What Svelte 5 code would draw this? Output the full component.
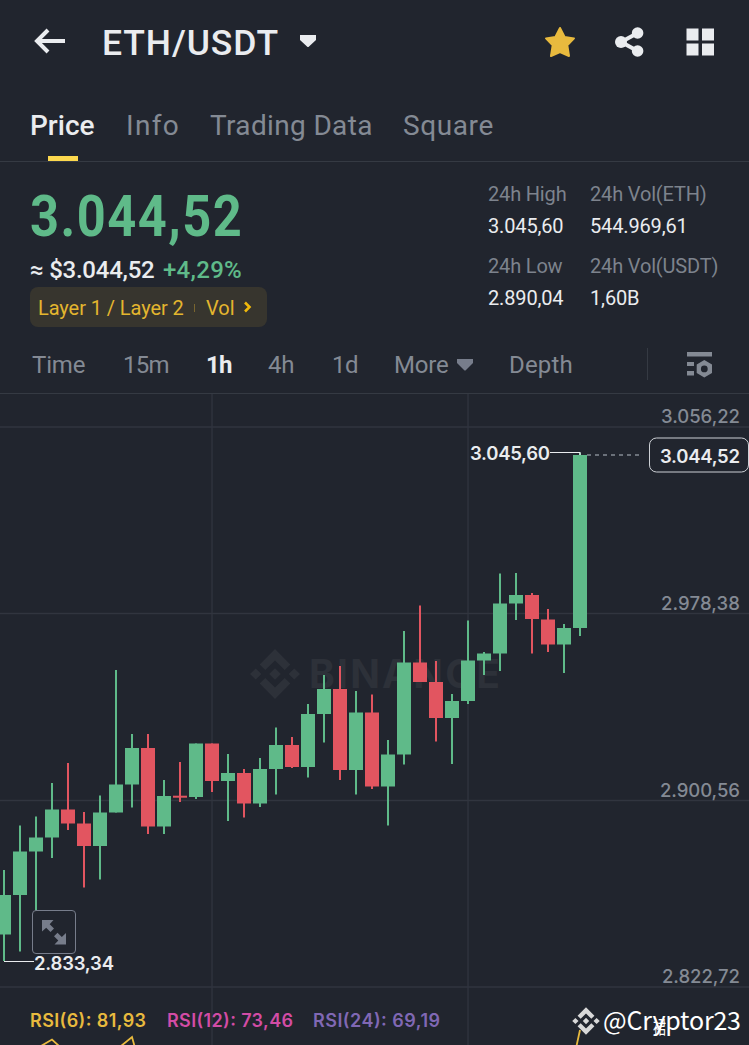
<script>
  const tabs = ['Price', 'Info', 'Trading Data', 'Square'];
  const stats = [
    ['24h High', '3.045,60'],
    ['24h Vol(ETH)', '544.969,61'],
    ['24h Low', '2.890,04'],
    ['24h Vol(USDT)', '1,60B']
  ];
  const levels = [
    { y: 427, label: '3.056,22', w: 79 },
    { y: 613.5, label: '2.978,38', w: 79 },
    { y: 800.5, label: '2.900,56', w: 80 },
    { y: 987, label: '2.822,72', w: 78 }
  ];
  // [rising, wick top, wick bottom, body top, body bottom]
  const candles = [
    [1, 870, 961, 895, 934.5], [1, 825.5, 951.5, 851.5, 895], [1, 816.5, 912, 837.5, 851.5],
    [1, 783, 858, 809.5, 837.5], [0, 763, 830, 809.5, 823.5], [0, 812, 887.5, 823.5, 846],
    [1, 795.5, 879.5, 812.5, 846], [1, 670, 812.5, 784.5, 812.5], [1, 734, 807.5, 748, 784.5],
    [0, 734, 834, 748, 826.5], [1, 780, 834, 796, 826.5], [0, 762, 802, 795.7, 797.7],
    [1, 743.5, 799, 743.5, 797], [0, 743.5, 792, 743.5, 781], [1, 754, 821, 773, 781],
    [0, 769, 817.5, 773, 803.5], [1, 758, 807, 769, 803.5], [1, 727.5, 794.5, 745, 769],
    [0, 737, 768, 745, 767], [1, 704, 777.5, 714, 767], [1, 675, 742.5, 689, 714],
    [0, 666, 780, 689, 770], [1, 691, 794.5, 712.5, 770], [0, 694.5, 789, 712.5, 786.5],
    [1, 740, 825.5, 754.5, 786.5], [1, 631, 764.5, 662.5, 754.5], [0, 605.5, 682, 662.5, 682],
    [0, 661, 741.5, 682, 718], [1, 694, 764, 701, 718], [1, 620.5, 704, 660.5, 701],
    [1, 652, 675, 653.5, 660.5], [1, 573.5, 671, 603.5, 653.5], [1, 573, 620, 595, 603.5],
    [0, 593, 653.5, 595, 619], [0, 609, 652, 619.5, 644.5], [1, 624, 673, 628, 644.5],
    [1, 453, 636, 455, 628]
  ];
</script>

{#snippet logo()}
  <path d="M0-25 15.3-9.6 9.7-4 0-13.6-9.7-4-15.3-9.6ZM0 25 15.3 9.6 9.7 4 0 13.6-9.7 4-15.3 9.6ZM0-5.8 5.8 0 0 5.8-5.8 0ZM-19.3-5.6-13.6 0-19.3 5.6-25 0ZM19.3-5.6 25 0 19.3 5.6 13.6 0Z" />
{/snippet}

<main>
  <header>
    <svg class="back" width="32" height="26" viewBox="0 0 32 26"><path d="M14 2 3 13l11 11M4 13h27" fill="none" stroke="#eaecef" stroke-width="4" /></svg>
    <h1>ETH/USDT</h1>
    <svg class="caret" width="16" height="13" viewBox="0 0 16 13"><path d="M0 0H16V5L9 11.500Q8 12.500 7 11.500L0 5Z" fill="#eaecef" /></svg>
    <div class="actions">
      <svg width="32" height="32" viewBox="0 0 32 32"><path d="M16 2 20.6 11 30 12.4 23.3 19.2 25 30 16 26 7 30 8.700 19.200 2 12.400 11.400 11Z" fill="#e8ba3e" stroke="#e8ba3e" stroke-width="2" stroke-linejoin="round" /></svg>
      <svg width="32" height="32" viewBox="0 0 32 32"><path d="M23.600 7 7.200 16 23.600 25" fill="none" stroke="#eaecef" stroke-width="4" /><g fill="#eaecef"><circle cx="23.600" cy="7" r="5.800" /><circle cx="7" cy="16" r="6" /><circle cx="23.600" cy="25" r="5.800" /></g></svg>
      <svg width="32" height="32" viewBox="0 0 32 32" fill="#eaecef"><path d="M2.500 2.500h12v12h-12zM18 2.500h12v12H18zM2.500 17.500h12v12h-12zM18 17.500h12v12H18z" /></svg>
    </div>
  </header>

  <nav class="tabs">
    {#each tabs as tab, i}<span class="tab t{i}" class:active={i === 0}>{tab}</span>{/each}
  </nav>

  <section class="summary">
    <div class="quote">
      <div class="price">3.044,52</div>
      <div class="sub"><span class="usd">≈ $3.044,52</span><span class="up">+4,29%</span></div>
      <div class="tag">
        <span class="layer">Layer 1 / Layer 2</span><i></i><span>Vol</span>
        <svg width="9" height="12" viewBox="0 0 9 12"><path d="M2 1.500 6.500 6 2 10.500" fill="none" stroke="#f0b90b" stroke-width="2.600" /></svg>
      </div>
    </div>
    <dl>
      {#each stats as [label, value]}
        <div><dt>{label}</dt><dd>{value}</dd></div>
      {/each}
    </dl>
  </section>

  <nav class="times">
    <span class="p0">Time</span><span class="p1">15m</span><span class="p2 on">1h</span><span class="p3">4h</span><span class="p4">1d</span>
    <span class="p5">More</span>
    <svg class="more" width="16" height="12" viewBox="0 0 16 12"><path d="M0 0H16V4L9 11Q8 12 7 11L0 4Z" fill="#777d8b" /></svg>
    <span class="p6">Depth</span>
    <div class="tools">
      <svg width="26" height="26" viewBox="0 0 26 26" fill="#848a94"><path d="M0 0h25v4.500H0zM0 10h7v4H0zM0 19h7v4.500H0z" /><path fill-rule="evenodd" d="M17.300 8 25 12.500V21L17.300 25.500 9.700 21V12.500ZM17.300 13.500a3.400 3.400 0 1 0 0 6.800 3.400 3.400 0 0 0 0-6.800Z" /></svg>
    </div>
  </nav>

  <svg class="chart" width="749" height="652" viewBox="0 393 749 652">
    <g stroke="#31353f" stroke-width="1.300">
      <path d="M212 394V1045M468 394V1045" />
      {#each levels as l}<path d="M0 {l.y}H749" />{/each}
    </g>
    <g fill="#2d3139">
      <g transform="translate(275 674)">{@render logo()}</g>
      <text x="309" y="688" class="brand" textLength="191">BINANCE</text>
    </g>
    {#each levels as l}<text class="axis" x={740 - l.w} y={l.y - 3.6} textLength={l.w}>{l.label}</text>{/each}
    {#each candles as [up, high, low, top, bottom], i}
      <g fill={up ? '#5fba89' : '#e25560'}>
        <rect x={3 + 16 * i} y={high} width="2" height={low - high} />
        <rect x={16 * i - 3} y={top} width="14" height={bottom - top} />
      </g>
    {/each}
    <path d="M550 452.500H580V455M4 961.500H34" fill="none" stroke="#eaecef" stroke-width="1.200" />
    <path d="M587 455H640" stroke="#848a94" stroke-width="1.500" stroke-dasharray="4 4" />
    <text class="mark" x="470" y="459.500" textLength="80">3.045,60</text>
    <text class="mark" x="34" y="969.500" textLength="80">2.833,34</text>
    <rect x="649.500" y="438" width="99" height="34" rx="7" fill="#21252e" stroke="#cdd0d5" />
    <text class="mark" x="660" y="462.500" textLength="80">3.044,52</text>
    <rect x="32.500" y="910.500" width="43" height="43" rx="3.500" fill="#21252e" stroke="#777d8b" />
    <path d="M42 920H53.500L49.700 924.200 54 928.500 50.500 932 46.200 927.700 42 931.500ZM66 944.500H54.500L58.300 940.500 54 936.200 57.500 932.700 61.800 937 66 933Z" fill="#777d8b" />
    <text class="rsi" x="30" y="1026.500" textLength="116" fill="#e8ba3e">RSI(6): 81,93</text>
    <text class="rsi" x="167" y="1026.500" textLength="126" fill="#d24ca5">RSI(12): 73,46</text>
    <text class="rsi" x="313" y="1026.500" textLength="127" fill="#8068b4">RSI(24): 69,19</text>
    <path d="M41 1046 52 1039.500 59 1046M121 1046 132 1037 134.500 1046M576.500 1046 580 1030" fill="none" stroke="#e8ba3e" stroke-width="1.800" />
    <g transform="translate(586 1021) scale(.55)" fill="#d8d8d8">{@render logo()}</g>
    <text class="handle" x="603" y="1030" textLength="138">@Cryptor23</text>
    <text class="mini" x="653" y="1034" textLength="13" lengthAdjust="spacingAndGlyphs">裙</text>
  </svg>
</main>

<style>
  :global(body) { background: #21252e; }
  main {
    width: 749px; height: 1045px; overflow: hidden; background: #21252e; color: #eaecef;
    font-family: Roboto, sans-serif; display: flex; flex-direction: column;
  }
  svg { display: block; flex: none; }
  header { height: 84px; display: flex; align-items: center; padding: 0 33px 0 34px; box-sizing: border-box; flex: none; }
  .back { margin-top: -2px; }
  h1 { margin: 1px 0 0 36px; width: 178px; font-size: 35.500px; line-height: 42px; font-weight: 500; letter-spacing: .900px; white-space: nowrap; }
  .caret { margin-left: 20px; margin-top: -1px; }
  .actions { margin-left: auto; display: flex; gap: 38px; }
  .tabs { height: 78px; box-sizing: border-box; border-bottom: 1px solid #353a43; display: flex; padding-left: 30px; gap: 31px; flex: none; font-size: 28px; line-height: 84px; color: #848a94; font-weight: 400; }
  .tab { position: relative; white-space: nowrap; height: 77px; letter-spacing: .35px; }
  .active { color: #eaecef; font-weight: 500; letter-spacing: 0; }
  .active::after { content: ''; position: absolute; left: 18px; bottom: 0; width: 30px; height: 5px; background: #fcd84e; }
  .t0 { width: 65px; } .t1 { width: 53px; letter-spacing: 1.300px; } .t2 { width: 162px; } .t3 { letter-spacing: .600px; }
  .summary { display: flex; justify-content: space-between; height: 173px; box-sizing: border-box; padding: 19px 30px 0; flex: none; }
  .price { margin: 1px 0 1px; width: 250px; font-size: 57.500px; line-height: 70px; font-weight: 700; color: #5fba89; letter-spacing: 1.700px; transform: scaleX(.88); transform-origin: left; }
  .sub { display: flex; gap: 9px; font-size: 24px; line-height: 34px; font-weight: 500; white-space: nowrap; }
  .usd { width: 124px; letter-spacing: -.250px; }
  .up { color: #5fba89; letter-spacing: .300px; }
  .tag { display: flex; align-items: center; width: 237px; height: 40px; box-sizing: border-box; padding: 2px 8px 0; border-radius: 8px; background: #37352e; color: #e4b62e; font-size: 20px; white-space: nowrap; }
  .layer { width: 146px; letter-spacing: -.080px; }
  .tag i { width: 1px; height: 8px; margin: 0 11px 0 10px; background: #79652f; }
  .tag svg { margin-left: 8px; margin-top: -3px; }
  dl { margin: 0; width: 231px; display: grid; grid-template-columns: 102px 129px; grid-auto-rows: 72px; white-space: nowrap; }
  dt { font-size: 20px; line-height: 27px; font-weight: 400; letter-spacing: -.170px; color: #7d838d; }
  dd { margin: 1px 0 0; font-size: 20px; line-height: 34px; letter-spacing: -.150px; }
  .times { height: 59px; box-sizing: border-box; border-bottom: 1px solid #353a43; display: flex; align-items: center; padding-left: 32px; flex: none; font-size: 24px; color: #848a94; white-space: nowrap; letter-spacing: -.150px; }
  .times span { padding-top: 2px; }
  .on { color: #eaecef; font-weight: 700; }
  .p0 { width: 91px; } .p1 { width: 83px; letter-spacing: -.800px; } .p2 { width: 62px; letter-spacing: -.800px; } .p3 { width: 64px; } .p4 { width: 62px; letter-spacing: -.500px; } .p5 { width: 55px; }
  .more { margin: 1px 36px 0 8px; }
  .p6 { letter-spacing: .150px; }
  .tools { margin-left: auto; width: 102px; height: 32px; box-sizing: border-box; border-left: 1px solid #353a43; padding: 4px 0 0 39px; }
  .chart { font-family: Inter, sans-serif; margin-top: -1px; }
  .axis { font-size: 18.500px; font-weight: 500; fill: #848a94; }
  .mark { font-size: 18.500px; font-weight: 600; fill: #eaecef; }
  .rsi { font-size: 18px; font-weight: 600; }
  .brand { font-size: 39px; font-weight: 700; }
  .handle { font: 25px 'Noto Sans CJK SC', sans-serif; fill: #fff; }
  .mini { font: 18px 'Noto Sans CJK SC', sans-serif; fill: #fff; }
</style>
